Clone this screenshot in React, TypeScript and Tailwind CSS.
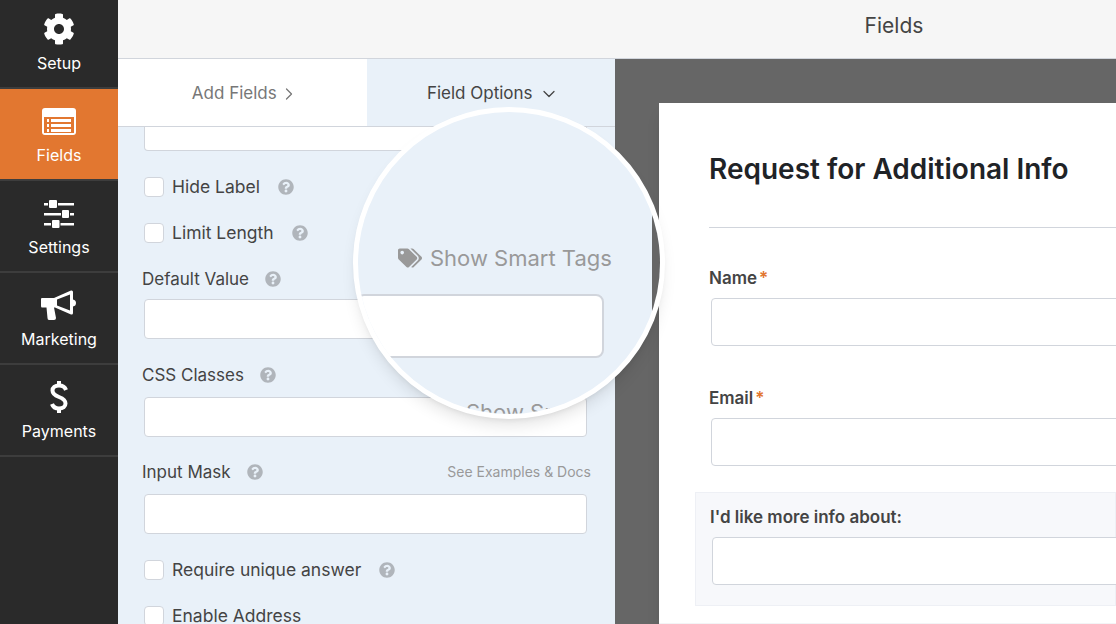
import React from "react";
import { ChevronDown, ChevronRight } from "lucide-react";
import { FaCog, FaQuestionCircle, FaTags } from "react-icons/fa";

const FieldsIcon = () => (
  <svg width="34" height="27" viewBox="0 0 34 27">
    <rect width="34" height="27" rx="3" fill="#fff" />
    <rect x="2" y="9" width="30" height="16" fill="#e27730" />
    {[11, 16, 21].map((y) => (
      <g key={y} fill="#fff">
        <rect x="5" y={y} width="2" height="3" />
        <rect x="9" y={y} width="20" height="3" />
      </g>
    ))}
  </svg>
);

const SlidersIcon = () => (
  <svg width="30" height="29" viewBox="0 0 30 29" fill="#fff" className="mt-0.5">
    <rect x="0" y="3" width="4" height="2.5" />
    <rect x="5" y="0" width="8" height="8" rx="1" />
    <rect x="14" y="3" width="16" height="2.5" />
    <rect x="0" y="13" width="17" height="2.5" />
    <rect x="18" y="10" width="7" height="8" rx="1" />
    <rect x="26" y="13" width="4" height="2.5" />
    <rect x="0" y="23" width="7" height="2.5" />
    <rect x="8" y="20" width="7.5" height="8" rx="1" />
    <rect x="16.5" y="23" width="13.5" height="2.5" />
  </svg>
);

const BullhornIcon = () => (
  <svg width="36" height="31" viewBox="0 0 36 31" fill="#fff">
    <path
      fillRule="evenodd"
      d="M1 8H13L30 .5Q32 0 32 2V9.5Q35 10 35 13T32 16.5V23Q32 25 30 24.5L14 17.5H13L15 28Q15 30 13 30H8Q6.5 30 6.5 28L5.5 17.5H1Q0 17.5 0 16V9Q0 8 1 8ZM16 9.5V15.5L29 20.5V4.5Z"
    />
  </svg>
);

const DollarIcon = () => (
  <svg width="18" height="34" viewBox="0 0 18 34" fill="none" stroke="#fff" strokeWidth="4">
    <path d="M16 10C15 7 12 5.5 9 5.5C5 5.5 2.5 7.5 2.5 10.5C2.5 14 5 15.5 9 17C13 18.5 15.5 20 15.5 23.5C15.5 26.5 13 28.5 9 28.5C5.5 28.5 3 27 2 24" />
    <path d="M9 1V5.5M9 28.5V33" />
  </svg>
);

const navItems = [
  { label: "Setup", icon: <FaCog size={32} /> },
  { label: "Fields", icon: <FieldsIcon />, active: true },
  { label: "Settings", icon: <SlidersIcon /> },
  { label: "Marketing", icon: <BullhornIcon /> },
  { label: "Payments", icon: <DollarIcon /> },
];

const Help = ({ className = "ml-4" }: { className?: string }) => (
  <FaQuestionCircle size={16} className={`text-[#b0b5bb] ${className}`} />
);

const CheckRow = ({ label, help = true, className = "" }: { label: string; help?: boolean; className?: string }) => (
  <div className={`flex h-8 shrink-0 items-center text-[17.5px] text-[#444] ${className}`}>
    <span className="ml-0.5 mr-2 size-5 rounded border border-gray-300 bg-white" />
    {label}
    {help && <Help className="ml-4.5" />}
  </div>
);

const LabelRow = ({ label, className = "", children }: { label: string; className?: string; children?: React.ReactNode }) => (
  <div className={`flex h-8 shrink-0 items-center text-[17px] text-[#444] ${className}`}>
    <span className="mt-0.5">{label}</span>
    <Help />
    {children}
  </div>
);

const PanelInput = ({ className = "mt-1.5" }: { className?: string }) => (
  <div className={`ml-0.5 h-10 shrink-0 rounded border border-gray-300 bg-white ${className}`} />
);

const FormField = ({ label, required, className = "" }: { label: string; required?: boolean; className?: string }) => (
  <div className={className}>
    <div className="ml-0.5 text-[17px] leading-7 font-semibold text-[#444]">
      {label}
      {required && <span className="ml-0.5 text-[#e27730]">*</span>}
    </div>
    <div className="mt-1.5 -mr-4 ml-1 h-12 rounded-sm border border-gray-300 bg-white" />
  </div>
);

const App = () => {
  return (
    <div className="relative flex h-screen w-screen overflow-hidden bg-white font-['Inter',sans-serif]">
      {/* Sidebar */}
      <aside className="flex w-[118px] shrink-0 flex-col bg-[#2a2a2a] text-white">
        <div className="-mt-[3px]">
          {navItems.map((item) => (
            <div
              key={item.label}
              className={`flex h-23 flex-col items-center border-b-2 border-[#3d3d3d] pt-3.5 ${item.active ? "bg-[#e27730]" : ""}`}
            >
              <div className="flex h-9 items-center justify-center">{item.icon}</div>
              <div className="mt-1 text-base leading-6">{item.label}</div>
            </div>
          ))}
        </div>
      </aside>

      <div className="flex min-w-0 flex-1 flex-col">
        {/* Header */}
        <header className="flex h-[59px] shrink-0 items-center justify-center border-b border-gray-300 bg-[#f6f6f6] pb-1.5 pl-[554px] text-[21px] text-[#444]">
          Fields
        </header>

        <div className="flex min-h-0 flex-1">
          {/* Options panel */}
          <section className="flex w-[497px] shrink-0 flex-col bg-[#e9f1f9]">
            <div className="grid h-17 shrink-0 grid-cols-2 border-b border-gray-300 text-[17px]">
              <div className="flex items-center justify-center gap-0.5 bg-white pt-0.5 pl-1.5 text-[#777]">
                Add Fields <ChevronRight size={20} strokeWidth={1.5} />
              </div>
              <div className="flex items-center justify-center gap-1.5 pt-0.5 pl-1 text-[#444]">
                Field Options <ChevronDown size={20} strokeWidth={1.5} />
              </div>
            </div>
            <div className="flex min-h-0 flex-1 flex-col overflow-hidden pr-7 pl-6">
              <div className="ml-0.5 h-6 shrink-0 rounded-b border border-t-0 border-gray-300 bg-white" />
              <CheckRow label="Hide Label" className="mt-5" />
              <CheckRow label="Limit Length" className="mt-3.5" />
              <LabelRow label="Default Value" className="mt-3.5" />
              <PanelInput className="mt-1" />
              <LabelRow label="CSS Classes" className="mt-5" />
              <PanelInput />
              <LabelRow label="Input Mask" className="mt-[19px]">
                <span className="-mr-1 ml-auto text-sm text-[#999]">See Examples &amp; Docs</span>
              </LabelRow>
              <PanelInput />
              <CheckRow label="Require unique answer" className="mt-5" />
              <CheckRow label="Enable Address" help={false} className="mt-3.5" />
            </div>
          </section>

          {/* Form preview */}
          <section className="flex min-w-0 flex-1 flex-col overflow-hidden bg-[#666] pt-11 pl-11">
            <div className="flex-1 border-b border-gray-100 bg-white pt-12 pl-12 shadow-lg">
              <h1 className="ml-0.5 text-[28px] leading-9 font-semibold text-[#1f2327]">Request for Additional Info</h1>
              <div className="mt-10 ml-0.5 border-t border-gray-300" />
              <FormField label="Name" required className="mt-9" />
              <FormField label="Email" required className="mt-9.5" />
              <div className="mt-6.5 -ml-3 border border-[#eef0f5] bg-[#f7f8fb] pt-2.5 pb-5 pl-3">
                <FormField label="I'd like more info about:" />
              </div>
            </div>
          </section>
        </div>
      </div>

      {/* Magnifier */}
      <div className="absolute top-[107px] left-[353px] size-78 overflow-hidden rounded-full border-[5px] border-white bg-[#e9f1f9] shadow-lg">
        <div className="absolute top-0 right-0 bottom-0 w-2 bg-[#666]" />
        <div className="flex flex-col pt-33 text-[22px] text-[#999]">
          <div className="flex h-7 items-center gap-2 pl-10">
            <FaTags size={24} /> Show Smart Tags
          </div>
          <div className="mt-5.5 -ml-0.5 h-16 w-62 rounded-lg border-2 border-gray-300 bg-white" />
          <div className="mt-10 ml-9 flex h-7 items-center gap-2 pl-10 whitespace-nowrap">
            <FaTags size={24} /> Show Smart Tags
          </div>
        </div>
      </div>
    </div>
  );
};

export default App;
